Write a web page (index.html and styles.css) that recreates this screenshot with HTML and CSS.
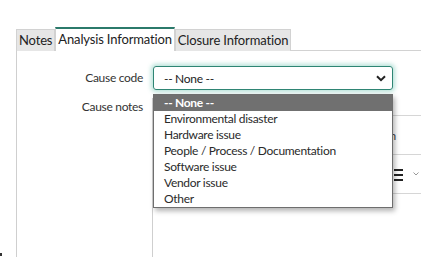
FILE: index.html
```html
<!DOCTYPE html>
<html lang="en">
<head>
    <meta charset="UTF-8">
    <title>Problem - Analysis Information</title>
    <link rel="stylesheet" href="styles.css">
</head>
<body>
    <div class="form">
        <div class="tabs">
            <div class="tab">Notes</div>
            <div class="tab active">Analysis Information</div>
            <div class="tab">Closure Information</div>
            <div class="tab-fill"></div>
        </div>
        <div class="panel">
            <div class="row">
                <label class="label">Cause code</label>
                <div class="field">
                    <div class="select">
                        <span>-- None --</span>
                        <svg class="chev" width="10" height="7" viewBox="0 0 10 7"><path d="M1 1.2 L5 5.2 L9 1.2" fill="none" stroke="#222" stroke-width="2"/></svg>
                    </div>
                    <ul class="options">
                        <li class="selected">-- None --</li>
                        <li>Environmental disaster</li>
                        <li>Hardware issue</li>
                        <li>People / Process / Documentation</li>
                        <li>Software issue</li>
                        <li>Vendor issue</li>
                        <li>Other</li>
                    </ul>
                </div>
            </div>
            <div class="row notes">
                <label class="label">Cause notes</label>
                <div class="editor">
                    <div class="bar bar-top"></div>
                    <div class="bar bar-mid"><span class="glyph">n</span></div>
                    <div class="bar bar-tools">
                        <svg width="10" height="12" viewBox="0 0 10 12"><path d="M0 1h9M0 6h9M0 11h9" stroke="#222" stroke-width="1.8"/></svg>
                        <svg class="small-chev" width="6" height="4" viewBox="0 0 6 4"><path d="M0.5 0.5 L3 3 L5.5 0.5" fill="none" stroke="#999" stroke-width="1"/></svg>
                    </div>
                    <div class="body"></div>
                </div>
            </div>
        </div>
    </div>
    <span class="corner"></span>
</body>
</html>
```

FILE: styles.css
```css
body {
    margin: 0;
    font-family: Lato, "Liberation Sans", sans-serif;
    font-size: 12px;
    letter-spacing: -0.3px;
    color: #2e2e2e;
    background: #fff;
    height: 257px;
    overflow: hidden;
}
.form {
    padding: 27px 0 0 16px;
}
.tabs {
    display: flex;
    align-items: flex-end;
    font-size: 13px;
    letter-spacing: -0.15px;
}
.tab {
    height: 21px;
    line-height: 21px;
    padding: 0 2px;
    background: #e6e6e6;
    border: 1px solid #d2d2d2;
    border-bottom: none;
    color: #222;
}
.tab.active {
    background: #fff;
    border: none;
    border-top: 2px solid #2b7a6b;
    border-left: 1px solid #d2d2d2;
    border-right: 1px solid #d2d2d2;
    height: 22px;
    padding: 0 2px;
}
.tab-fill {
    flex: 1;
    border-bottom: 1px solid #d2d2d2;
}
.panel {
    border-left: 1px solid #cfcfcf;
    height: 210px;
}
.row {
    display: flex;
    align-items: flex-start;
}
.label {
    width: 126px;
    text-align: right;
    padding-right: 10px;
    color: #333;
}
.row:first-child {
    padding-top: 15px;
}
.row:first-child .label {
    line-height: 24px;
}
.field {
    position: relative;
    width: 240px;
}
.select {
    height: 22px;
    border: 1px solid #2f8574;
    border-radius: 3px;
    box-shadow: 0 0 4px 2px rgba(96, 190, 170, 0.45);
    display: flex;
    align-items: center;
    justify-content: space-between;
    padding: 0 6px 0 10px;
    color: #222;
}
.options {
    position: absolute;
    top: 28px;
    left: 0;
    width: 238px;
    margin: 0;
    padding: 0;
    list-style: none;
    background: #fff;
    border: 1px solid #6e6e6e;
    box-shadow: 2px 3px 5px rgba(0, 0, 0, 0.3);
    z-index: 2;
}
.options li {
    height: 16px;
    line-height: 16px;
    padding-left: 10px;
    color: #2a2a2a;
}
.options li.selected {
    background: #707070;
    color: #fff;
    font-weight: bold;
}
.row.notes {
    padding-top: 8px;
}
.row.notes .label {
    line-height: 18px;
}
.editor {
    flex: 1;
    border-left: 1px solid #cfcfcf;
    height: 170px;
    margin-left: -1px;
}
.bar {
    border-bottom: 1px solid #d6d6d6;
    display: flex;
    align-items: center;
    justify-content: flex-end;
}
.bar-top {
    height: 17px;
}
.bar-mid {
    height: 38px;
}
.glyph {
    margin-right: 25px;
    font-size: 12px;
    color: #444;
}
.bar-tools {
    height: 38px;
    gap: 9px;
    padding-right: 2px;
}
.bar-tools svg:first-child {
    margin-top: 2px;
}
.corner {
    position: absolute;
    left: 0;
    top: 253px;
    width: 2px;
    height: 3px;
    background: #333;
}
```
